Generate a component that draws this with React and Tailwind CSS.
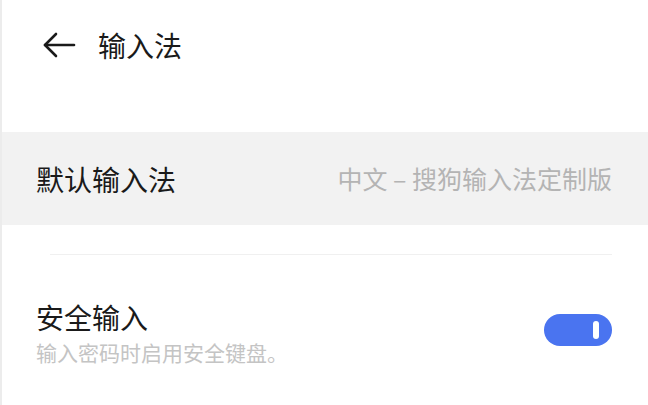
export default function App() {
  return (
    <div
      className="w-[648px] h-[405px] bg-white overflow-hidden border-l-2 border-[#ececec]"
      style={{ fontFamily: '"Noto Sans CJK SC", "Noto Sans", sans-serif' }}
    >
      {/* Header */}
      <div className="h-[90px] flex items-center pl-[40px]">
        <svg width="34" height="28" viewBox="0 0 34 28" fill="none" stroke="#1a1a1a" strokeWidth="2.6" strokeLinecap="round" strokeLinejoin="round">
          <path d="M32 14H3" />
          <path d="M14 3L3 14L14 25" />
        </svg>
        <span className="ml-[22px] text-[28px] leading-none text-[#1a1a1a]">输入法</span>
      </div>

      <div className="h-[42px]" />

      {/* Default input method row (pressed state) */}
      <div className="h-[93px] bg-[#f2f2f2] flex items-center justify-between pl-[34px] pr-[36px]">
        <span className="text-[28px] leading-none text-[#1a1a1a]">默认输入法</span>
        <span className="text-[25px] leading-none text-[#b4b4b4]">中文 – 搜狗输入法定制版</span>
      </div>

      <div className="h-[29px]" />
      <div className="ml-[48px] mr-[36px] h-[1px] bg-[#f0f0f0]" />

      {/* Secure input row */}
      <div className="flex items-center justify-between pl-[34px] pr-[36px] pt-[42px]">
        <div className="flex flex-col">
          <span className="text-[28px] leading-[40px] text-[#1a1a1a]">安全输入</span>
          <span className="text-[21px] leading-[30px] text-[#c4c4c4]">输入密码时启用安全键盘。</span>
        </div>
        <div className="w-[68px] h-[32px] mb-[4px] rounded-full bg-[#4a74f0] flex items-center justify-end pr-[13px]">
          <div className="w-[6px] h-[18px] rounded-full bg-white" />
        </div>
      </div>
    </div>
  );
}
